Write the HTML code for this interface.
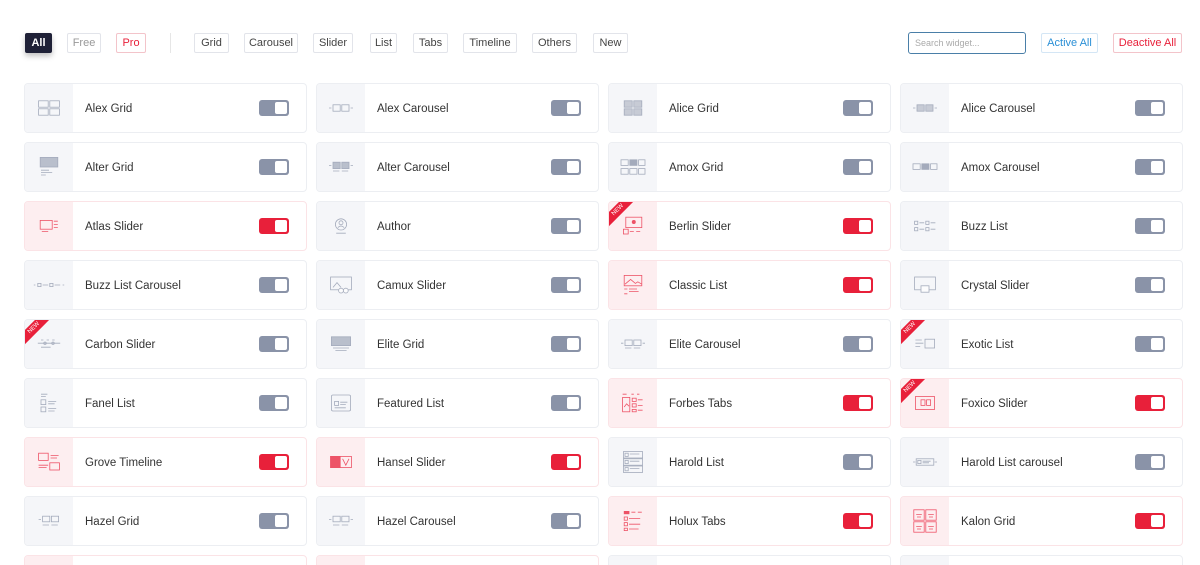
<!DOCTYPE html>
<html><head><meta charset="utf-8"><style>
*{box-sizing:border-box;margin:0;padding:0}
html,body{width:1200px;height:565px;overflow:hidden}
body{background:#fff;font-family:"Liberation Sans",sans-serif;position:relative}
.b{position:absolute;top:33px;height:20px;border:1px solid #e2e4ea;border-radius:2px;font-size:11px;color:#444;display:flex;align-items:center;justify-content:center;background:#fff}
.grid{position:absolute;left:24px;top:83px;display:grid;grid-template-columns:repeat(4,283px);grid-auto-rows:50px;column-gap:9px;row-gap:9px}
.c{border:1px solid #eceef2;border-radius:4px;display:flex;align-items:center;position:relative;overflow:hidden;background:#fff}
.c.r{border-color:#fbe3e6}
.ic{width:48px;height:100%;background:#f5f6f9;display:flex;align-items:center;justify-content:center}
.ic svg{transform:scale(.8);opacity:.75}
.r .ic{background:#fdeef0}
.n{margin-left:12px;font-size:11.5px;color:#333;flex:1;padding-top:1px}
.t{width:30px;height:16px;border-radius:3px;background:#8a93a8;margin-right:17px;position:relative}
.r .t{background:#e8203a}
.t:after{content:"";position:absolute;right:2px;top:2px;width:12px;height:12px;background:#fff;border-radius:2px}
.new{position:absolute;left:-13px;top:3px;width:44px;height:10px;background:#e8203a;color:#fff;font-size:6px;text-align:center;line-height:10px;transform:rotate(-45deg)}
svg{display:block}
</style></head><body>
<div class="b" style="left:25px;width:27px;background:#1f2137;color:#fff;border-color:#1f2137;font-weight:bold;box-shadow:0 3px 6px rgba(0,0,0,.25)">All</div>
<div class="b" style="left:67px;width:34px;color:#999">Free</div>
<div class="b" style="left:116px;width:30px;color:#e8203a;border-color:#f3c4ca">Pro</div>
<div style="position:absolute;left:170px;top:33px;width:1px;height:20px;background:#e6e6e6"></div>
<div class="b" style="left:194px;width:35px">Grid</div>
<div class="b" style="left:244px;width:54px">Carousel</div>
<div class="b" style="left:313px;width:40px">Slider</div>
<div class="b" style="left:370px;width:27px">List</div>
<div class="b" style="left:413px;width:35px">Tabs</div>
<div class="b" style="left:463px;width:54px">Timeline</div>
<div class="b" style="left:532px;width:45px">Others</div>
<div class="b" style="left:593px;width:35px">New</div>
<div style="position:absolute;left:908px;top:32px;width:118px;height:22px;border:1px solid #4a7fa8;border-radius:3px;font-size:9px;color:#aaa;padding-left:6px;line-height:20px">Search widget...</div>
<div class="b" style="left:1041px;width:57px;color:#2a8fd6;border-color:#d4e6f5">Active All</div>
<div class="b" style="left:1113px;width:69px;color:#e8203a;border-color:#f3c4ca">Deactive All</div>

<div class="grid">
<div class="c"><div class="ic"><svg width="28" height="20" fill="none" stroke="#8a93a8"><rect x="1" y="1" width="12" height="8"/><rect x="15" y="1" width="12" height="8"/><rect x="1" y="11" width="12" height="8"/><rect x="15" y="11" width="12" height="8"/></svg></div><div class="n">Alex Grid</div><div class="t"></div></div>
<div class="c"><div class="ic"><svg width="32" height="10" fill="none" stroke="#8a93a8"><rect x="6" y="1" width="9" height="8"/><rect x="17" y="1" width="9" height="8"/><path d="M1 5h3M28 5h3"/></svg></div><div class="n">Alex Carousel</div><div class="t"></div></div>
<div class="c"><div class="ic"><svg width="24" height="20" fill="#b8bdca" stroke="#8a93a8"><rect x="1" y="1" width="10" height="8"/><rect x="13" y="1" width="10" height="8"/><rect x="1" y="11" width="10" height="8"/><rect x="13" y="11" width="10" height="8"/></svg></div><div class="n">Alice Grid</div><div class="t"></div></div>
<div class="c"><div class="ic"><svg width="32" height="10" fill="#b8bdca" stroke="#8a93a8"><rect x="6" y="1" width="9" height="8"/><rect x="17" y="1" width="9" height="8"/><path d="M1 5h3M28 5h3"/></svg></div><div class="n">Alice Carousel</div><div class="t"></div></div>

<div class="c"><div class="ic"><svg width="24" height="26" stroke="#8a93a8" fill="none"><rect x="1" y="1" width="22" height="12" fill="#a6adbd"/><path d="M2 17h10M2 20h14M2 23h6"/></svg></div><div class="n">Alter Grid</div><div class="t"></div></div>
<div class="c"><div class="ic"><svg width="32" height="14" fill="#a6adbd" stroke="#8a93a8"><rect x="6" y="1" width="9" height="8"/><rect x="17" y="1" width="9" height="8"/><path d="M1 5h3M28 5h3M6 12h8M17 12h8"/></svg></div><div class="n">Alter Carousel</div><div class="t"></div></div>
<div class="c"><div class="ic"><svg width="32" height="20" fill="none" stroke="#8a93a8"><rect x="1" y="1" width="9" height="7"/><rect x="12" y="1" width="9" height="7" fill="#8a93a8"/><rect x="23" y="1" width="8" height="7"/><rect x="1" y="12" width="9" height="7"/><rect x="12" y="12" width="9" height="7"/><rect x="23" y="12" width="8" height="7"/></svg></div><div class="n">Amox Grid</div><div class="t"></div></div>
<div class="c"><div class="ic"><svg width="32" height="10" fill="none" stroke="#8a93a8"><rect x="1" y="1" width="9" height="7"/><rect x="12" y="1" width="9" height="7" fill="#8a93a8"/><rect x="23" y="1" width="8" height="7"/></svg></div><div class="n">Amox Carousel</div><div class="t"></div></div>

<div class="c r"><div class="ic"><svg width="24" height="18" fill="none" stroke="#e8203a" opacity=".6"><rect x="1" y="2" width="15" height="11"/><path d="M18 3h5M18 7h5M18 11h5M3 16h8"/></svg></div><div class="n">Atlas Slider</div><div class="t"></div></div>
<div class="c"><div class="ic"><svg width="20" height="22" fill="none" stroke="#8a93a8"><circle cx="10" cy="9" r="7"/><circle cx="10" cy="7" r="2.5"/><path d="M6 13q4-4 8 0M4 20h12"/></svg></div><div class="n">Author</div><div class="t"></div></div>
<div class="c r"><div class="new">NEW</div><div class="ic"><svg width="26" height="24" fill="none" stroke="#e8203a"><rect x="4" y="1" width="20" height="13"/><circle cx="14" cy="7" r="2" fill="#e8203a"/><rect x="1" y="16" width="6" height="6"/><path d="M9 19h5M17 19h5"/></svg></div><div class="n">Berlin Slider</div><div class="t"></div></div>
<div class="c"><div class="ic"><svg width="28" height="14" fill="none" stroke="#8a93a8"><rect x="1" y="1" width="4" height="4"/><rect x="15" y="1" width="4" height="4"/><rect x="1" y="9" width="4" height="4"/><rect x="15" y="9" width="4" height="4"/><path d="M7 3h6M21 3h6M7 11h6M21 11h6"/></svg></div><div class="n">Buzz List</div><div class="t"></div></div>

<div class="c"><div class="ic"><svg width="40" height="8" fill="none" stroke="#8a93a8"><path d="M1 4h2M37 4h2M12 4h7M27 4h7"/><rect x="6" y="2" width="4" height="4"/><rect x="21" y="2" width="4" height="4"/></svg></div><div class="n">Buzz List Carousel</div><div class="t"></div></div>
<div class="c"><div class="ic"><svg width="28" height="22" fill="none" stroke="#8a93a8"><rect x="1" y="1" width="26" height="16"/><path d="M4 14l5-6 5 6" /><circle cx="14" cy="18" r="3" fill="#fff"/><circle cx="20" cy="18" r="3" fill="#fff"/></svg></div><div class="n">Camux Slider</div><div class="t"></div></div>
<div class="c r"><div class="ic"><svg width="24" height="26" fill="none" stroke="#e8203a"><rect x="1" y="1" width="22" height="13"/><path d="M2 12l7-6 6 5 3-2 5 3M1 18h4M7 18h10M7 21h12M1 24h4"/></svg></div><div class="n">Classic List</div><div class="t"></div></div>
<div class="c"><div class="ic"><svg width="28" height="22" fill="none" stroke="#8a93a8"><rect x="1" y="1" width="26" height="16"/><rect x="9" y="12" width="10" height="8" fill="#fff"/></svg></div><div class="n">Crystal Slider</div><div class="t"></div></div>

<div class="c"><div class="new">NEW</div><div class="ic"><svg width="30" height="14" fill="none" stroke="#8a93a8"><path d="M5 2h3M12 2h3M19 2h3M1 6h28M5 11h12"/><circle cx="10" cy="6" r="1.5"/><circle cx="20" cy="6" r="1.5"/></svg></div><div class="n">Carbon Slider</div><div class="t"></div></div>
<div class="c"><div class="ic"><svg width="26" height="20" fill="none" stroke="#8a93a8"><rect x="1" y="1" width="24" height="11" fill="#a6adbd"/><path d="M3 15h20M6 18h14"/></svg></div><div class="n">Elite Grid</div><div class="t"></div></div>
<div class="c"><div class="ic"><svg width="32" height="12" fill="none" stroke="#8a93a8"><rect x="6" y="1" width="9" height="7"/><rect x="17" y="1" width="9" height="7"/><path d="M1 5h3M28 5h3M6 11h8M17 11h8"/></svg></div><div class="n">Elite Carousel</div><div class="t"></div></div>
<div class="c"><div class="new">NEW</div><div class="ic"><svg width="26" height="14" fill="none" stroke="#8a93a8"><path d="M1 2h8M1 6h10M1 10h6"/><rect x="13" y="1" width="12" height="11"/></svg></div><div class="n">Exotic List</div><div class="t"></div></div>

<div class="c"><div class="ic"><svg width="22" height="26" fill="none" stroke="#8a93a8"><path d="M1 2h8M1 5h6"/><rect x="1" y="9" width="6" height="6"/><rect x="1" y="18" width="6" height="6"/><path d="M10 11h10M10 14h8M10 20h10M10 23h8"/></svg></div><div class="n">Fanel List</div><div class="t"></div></div>
<div class="c"><div class="ic"><svg width="26" height="22" fill="none" stroke="#8a93a8"><rect x="1" y="1" width="24" height="20" rx="2"/><rect x="5" y="9" width="5" height="5"/><path d="M12 10h9M12 13h7M5 17h14"/></svg></div><div class="n">Featured List</div><div class="t"></div></div>
<div class="c r"><div class="ic"><svg width="28" height="26" fill="none" stroke="#e8203a"><path d="M1 2h5M12 2h3M19 2h3"/><rect x="1" y="6" width="9" height="18"/><path d="M3 18l3-4 3 3"/><rect x="13" y="7" width="5" height="4"/><rect x="13" y="14" width="5" height="4"/><rect x="13" y="21" width="5" height="3"/><path d="M20 9h6M20 16h6M20 22h6"/></svg></div><div class="n">Forbes Tabs</div><div class="t"></div></div>
<div class="c r"><div class="new">NEW</div><div class="ic"><svg width="26" height="18" fill="none" stroke="#e8203a"><rect x="1" y="1" width="24" height="16"/><rect x="8" y="5" width="5" height="7"/><rect x="15" y="5" width="5" height="7"/></svg></div><div class="n">Foxico Slider</div><div class="t"></div></div>

<div class="c r"><div class="ic"><svg width="28" height="24" fill="none" stroke="#e8203a"><rect x="1" y="1" width="12" height="9"/><rect x="15" y="13" width="12" height="9"/><path d="M16 4h10M16 7h8M1 16h12M1 19h10"/></svg></div><div class="n">Grove Timeline</div><div class="t"></div></div>
<div class="c r"><div class="ic"><svg width="28" height="16" fill="none" stroke="#e8203a"><rect x="1" y="1" width="26" height="14"/><rect x="1" y="1" width="12" height="14" fill="#e8203a"/><path d="M16 4l4 8 4-8"/></svg></div><div class="n">Hansel Slider</div><div class="t"></div></div>
<div class="c"><div class="ic"><svg width="26" height="28" fill="none" stroke="#8a93a8"><rect x="1" y="1" width="24" height="8"/><rect x="1" y="10" width="24" height="8"/><rect x="1" y="19" width="24" height="8"/><rect x="3" y="3" width="4" height="4"/><rect x="3" y="12" width="4" height="4"/><rect x="3" y="21" width="4" height="4"/><path d="M9 4h12M9 13h12M9 22h12"/></svg></div><div class="n">Harold List</div><div class="t"></div></div>
<div class="c"><div class="ic"><svg width="32" height="10" fill="none" stroke="#8a93a8"><path d="M1 5h3M28 5h3"/><rect x="5" y="1" width="22" height="8"/><rect x="7" y="3" width="4" height="4"/><path d="M13 4h10M13 6h8"/></svg></div><div class="n">Harold List carousel</div><div class="t"></div></div>

<div class="c"><div class="ic"><svg width="28" height="14" fill="none" stroke="#8a93a8"><rect x="6" y="1" width="9" height="7"/><rect x="17" y="1" width="9" height="7"/><path d="M1 5h3M6 12h8M17 12h8"/></svg></div><div class="n">Hazel Grid</div><div class="t"></div></div>
<div class="c"><div class="ic"><svg width="32" height="14" fill="none" stroke="#8a93a8"><rect x="6" y="1" width="9" height="7"/><rect x="17" y="1" width="9" height="7"/><path d="M1 5h3M28 5h3M6 12h8M17 12h8"/></svg></div><div class="n">Hazel Carousel</div><div class="t"></div></div>
<div class="c r"><div class="ic"><svg width="24" height="26" fill="none" stroke="#e8203a"><rect x="1" y="1" width="6" height="3" fill="#e8203a"/><path d="M10 2h5M18 2h5"/><rect x="1" y="8" width="4" height="4"/><rect x="1" y="15" width="4" height="4"/><rect x="1" y="22" width="4" height="3"/><path d="M7 10h14M7 17h14M7 23h12"/></svg></div><div class="n">Holux Tabs</div><div class="t"></div></div>
<div class="c r"><div class="ic"><svg width="30" height="30" fill="none" stroke="#e8203a"><rect x="1" y="1" width="13" height="13"/><rect x="16" y="1" width="13" height="13"/><rect x="1" y="16" width="13" height="13"/><rect x="16" y="16" width="13" height="13"/><path d="M4 7h7M19 7h7M4 22h7M19 22h7M5 10h5M20 10h5M5 25h5M20 25h5"/></svg></div><div class="n">Kalon Grid</div><div class="t"></div></div>

<div class="c r"><div class="ic"></div></div>
<div class="c r"><div class="ic"></div></div>
<div class="c"><div class="ic"></div></div>
<div class="c"><div class="ic"></div></div>
</div>
</body></html>
